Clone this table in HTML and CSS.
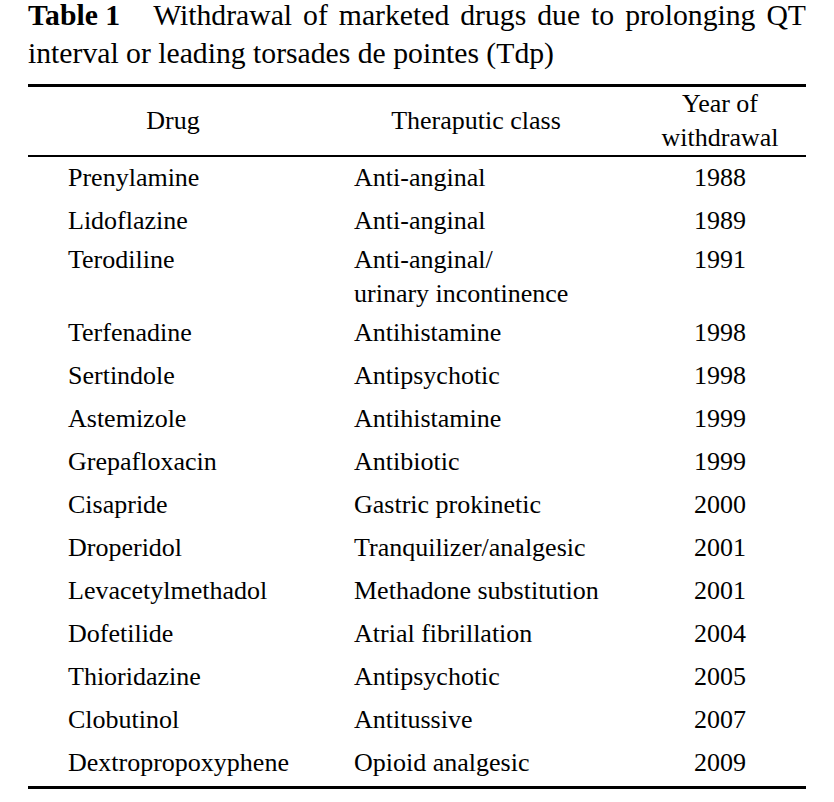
FILE: index.html
```html
<!DOCTYPE html>
<html lang="en">
<head>
<meta charset="utf-8">
<title>Table 1</title>
<link rel="stylesheet" href="styles.css">
</head>
<body>
<div class="page">
  <p class="caption"><span class="cap-line first"><b class="label">Table 1</b>Withdrawal of marketed drugs due to prolonging QT</span><span class="cap-line">interval or leading torsades de pointes (Tdp)</span></p>
  <table class="drugs">
    <colgroup>
      <col class="c-drug">
      <col class="c-class">
      <col class="c-year">
    </colgroup>
    <thead>
      <tr>
        <th>Drug</th>
        <th>Theraputic class</th>
        <th>Year of<br>withdrawal</th>
      </tr>
    </thead>
    <tbody>
      <tr><td>Prenylamine</td><td>Anti-anginal</td><td>1988</td></tr>
      <tr><td>Lidoflazine</td><td>Anti-anginal</td><td>1989</td></tr>
      <tr class="tall"><td>Terodiline</td><td>Anti-anginal/<br>urinary incontinence</td><td>1991</td></tr>
      <tr><td>Terfenadine</td><td>Antihistamine</td><td>1998</td></tr>
      <tr><td>Sertindole</td><td>Antipsychotic</td><td>1998</td></tr>
      <tr><td>Astemizole</td><td>Antihistamine</td><td>1999</td></tr>
      <tr><td>Grepafloxacin</td><td>Antibiotic</td><td>1999</td></tr>
      <tr><td>Cisapride</td><td>Gastric prokinetic</td><td>2000</td></tr>
      <tr><td>Droperidol</td><td>Tranquilizer/analgesic</td><td>2001</td></tr>
      <tr><td>Levacetylmethadol</td><td>Methadone substitution</td><td>2001</td></tr>
      <tr><td>Dofetilide</td><td>Atrial fibrillation</td><td>2004</td></tr>
      <tr><td>Thioridazine</td><td>Antipsychotic</td><td>2005</td></tr>
      <tr><td>Clobutinol</td><td>Antitussive</td><td>2007</td></tr>
      <tr><td>Dextropropoxyphene</td><td>Opioid analgesic</td><td>2009</td></tr>
    </tbody>
  </table>
</div>
</body>
</html>
```
FILE: styles.css
```css
html, body {
  margin: 0;
  padding: 0;
  background: #ffffff;
}

body {
  font-family: "Liberation Serif", "Times New Roman", serif;
  color: #000000;
}

.page {
  width: 778px;
  padding-left: 28px;
  padding-top: 1px;
}

.caption {
  margin: -5px 0 0 0;
  font-size: 29.7px;
  line-height: 38px;
}

.cap-line {
  display: block;
  white-space: nowrap;
}

.cap-line.first {
  text-align: justify;
  text-align-last: justify;
}

.caption .label {
  display: inline-block;
  font-weight: bold;
  margin-right: 33px;
}

.drugs {
  margin-top: 12px;
  width: 778px;
  table-layout: fixed;
  border-collapse: collapse;
  border-top: 3px solid #000;
  border-bottom: 3px solid #000;
  font-size: 26px;
  line-height: 34px;
}

.c-drug { width: 290px; }
.c-class { width: 316px; }
.c-year { width: 172px; }

.drugs th {
  font-weight: normal;
  text-align: center;
  vertical-align: middle;
  padding: 0;
  border-bottom: 2px solid #000;
}

.drugs td {
  vertical-align: top;
  padding: 4px 0 5px 0;
  white-space: nowrap;
}

.drugs tr.tall td {
  padding-top: 0;
  padding-bottom: 1px;
}

.drugs td:nth-child(1) {
  padding-left: 40px;
}

.drugs td:nth-child(2) {
  padding-left: 36px;
}

.drugs td:nth-child(3) {
  text-align: center;
}

.drugs tbody tr:last-child td {
  padding-bottom: 6px;
}
```
